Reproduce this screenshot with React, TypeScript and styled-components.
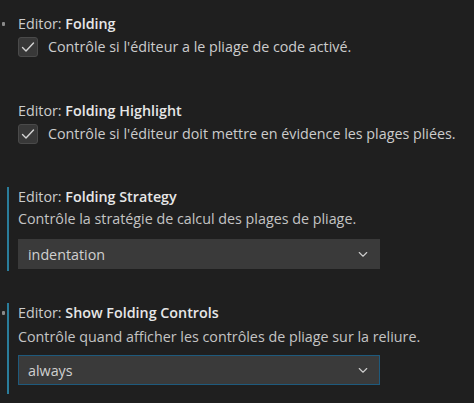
import styled, { createGlobalStyle } from "styled-components";

const GlobalStyle = createGlobalStyle`
  html, body {
    margin: 0;
    padding: 0;
    background: #1f1f1f;
  }
  body {
    font-family: "Open Sans", "Noto Sans", sans-serif;
    font-size: 14.3px;
    color: #cccccc;
  }
`;

const Page = styled.div`
  display: flex;
  flex-direction: column;
  width: 474px;
  height: 403px;
  padding-top: 14px;
  box-sizing: border-box;
  overflow: hidden;
`;

interface ItemProps {
  $focused?: boolean;
  $gap: number;
  $bottom?: number;
}

const Item = styled.div<ItemProps>`
  position: relative;
  margin-top: ${(p) => p.$gap}px;
  margin-left: 7px;
  padding-left: 9px;
  padding-bottom: ${(p) => p.$bottom ?? 0}px;
  border-left: 2px solid ${(p) => (p.$focused ? "#2a7d9b" : "transparent")};
  display: flex;
  flex-direction: column;
`;

const Gear = styled.span`
  position: absolute;
  left: -7px;
  top: 8px;
  width: 3px;
  height: 4px;
  background: #8a8a8a;
  border-radius: 1px;
`;

const Title = styled.div`
  line-height: 20px;
  height: 20px;
  color: #cccccc;
  white-space: nowrap;

  b {
    font-weight: 600;
    color: #e7e7e7;
  }
`;

const CheckRow = styled.label`
  display: flex;
  align-items: center;
  gap: 10px;
  margin-top: 3px;
  line-height: 20px;
  white-space: nowrap;
`;

const Box = styled.span`
  width: 20px;
  height: 20px;
  box-sizing: border-box;
  border: 1px solid #4a4a4a;
  background: #383838;
  border-radius: 3px;
  display: flex;
  align-items: center;
  justify-content: center;
`;

const Description = styled.div<{ $top: number }>`
  margin-top: ${(p) => p.$top}px;
  line-height: 20px;
  color: #c4c4c4;
  white-space: nowrap;
`;

const Select = styled.div<{ $focused?: boolean; $top: number }>`
  margin-top: ${(p) => p.$top}px;
  width: 362px;
  height: 30px;
  box-sizing: border-box;
  background: #3a3a3a;
  border: 1px solid ${(p) => (p.$focused ? "#1e5a7d" : "#3a3a3a")};
  display: flex;
  align-items: center;
  justify-content: space-between;
  padding: 0 10px 0 9px;
  color: #d0d0d0;
`;

function Check() {
  return (
    <svg width="16" height="16" viewBox="0 0 16 16" fill="none">
      <path
        d="M2.5 8.5l3.5 3.5 7.5-8"
        stroke="#d4d4d4"
        strokeWidth="1.4"
        strokeLinecap="round"
        strokeLinejoin="round"
      />
    </svg>
  );
}

function Chevron() {
  return (
    <svg width="12" height="12" viewBox="0 0 16 16" fill="none">
      <path
        d="M3 6l5 5 5-5"
        stroke="#cccccc"
        strokeWidth="1.5"
        strokeLinecap="round"
        strokeLinejoin="round"
      />
    </svg>
  );
}

export default function App() {
  return (
    <>
      <GlobalStyle />
      <Page>
        <Item $gap={0}>
          <Gear />
          <Title>
            Editor: <b>Folding</b>
          </Title>
          <CheckRow>
            <Box>
              <Check />
            </Box>
            Contrôle si l'éditeur a le pliage de code activé.
          </CheckRow>
        </Item>

        <Item $gap={44}>
          <Title>
            Editor: <b>Folding Highlight</b>
          </Title>
          <CheckRow>
            <Box>
              <Check />
            </Box>
            Contrôle si l'éditeur doit mettre en évidence les plages pliées.
          </CheckRow>
        </Item>

        <Item $gap={43} $focused $bottom={2}>
          <Title>
            Editor: <b>Folding Strategy</b>
          </Title>
          <Description $top={2}>
            Contrôle la stratégie de calcul des plages de pliage.
          </Description>
          <Select $top={10}>
            <span>indentation</span>
            <Chevron />
          </Select>
        </Item>

        <Item $gap={32} $focused $bottom={9}>
          <Gear />
          <Title>
            Editor: <b>Show Folding Controls</b>
          </Title>
          <Description $top={4}>
            Contrôle quand afficher les contrôles de pliage sur la reliure.
          </Description>
          <Select $focused $top={8}>
            <span>always</span>
            <Chevron />
          </Select>
        </Item>
      </Page>
    </>
  );
}
